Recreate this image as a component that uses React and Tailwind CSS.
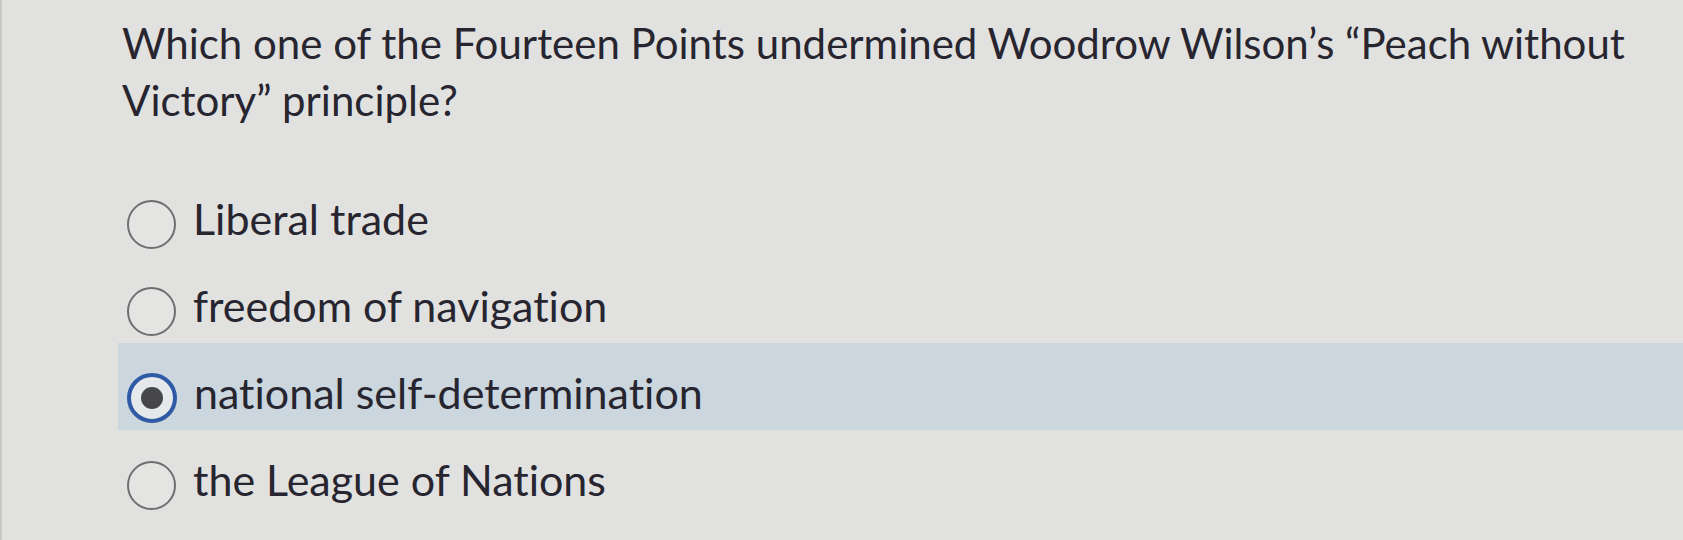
const OPTIONS = [
  { id: 'trade', label: 'Liberal trade' },
  { id: 'nav', label: 'freedom of navigation' },
  { id: 'self', label: 'national self-determination' },
  { id: 'league', label: 'the League of Nations' },
]

function Radio({ checked }) {
  if (checked) {
    return (
      <span className="mt-[30px] flex h-[50px] w-[50px] shrink-0 items-center justify-center rounded-full border-[4px] border-[#2f5aa6] bg-[#e6e9ec]">
        <span className="h-[22px] w-[22px] rounded-full bg-[#47474b]" />
      </span>
    )
  }
  return <span className="mt-[31px] h-[49px] w-[49px] shrink-0 rounded-full border-[2.5px] border-[#6f6f72] bg-[#e4e4e2]" />
}

export default function App() {
  const selected = 'self'

  return (
    <div className="h-[540px] w-full overflow-hidden border-l-[2px] border-[#c9c9c7] bg-[#e1e1df] font-['Lato','Liberation_Sans',sans-serif] text-[#27252f] [font-variant-ligatures:none]">
      <div className="pl-[116px] pt-[15px]">
        <h1 className="pl-[4px] text-[42px] leading-[57px] font-normal">
          Which one of the Fourteen Points undermined Woodrow Wilson’s “Peach without
          <br />
          Victory” principle?
        </h1>

        <div className="mt-[40px] flex flex-col">
          {OPTIONS.map((o) => (
            <label
              key={o.id}
              className={`flex h-[87px] items-start gap-[17px] pl-[9px] ${o.id === selected ? 'bg-[#cbd6de]' : ''}`}
            >
              <Radio checked={o.id === selected} />
              <span className="mt-[26px] text-[43px] leading-[48px]">{o.label}</span>
            </label>
          ))}
        </div>
      </div>
    </div>
  )
}
